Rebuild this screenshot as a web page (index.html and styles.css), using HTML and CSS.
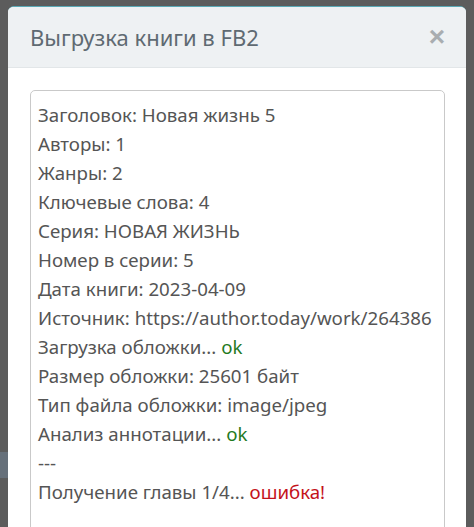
FILE: index.html
```html
<!DOCTYPE html>
<html lang="ru">
<head>
<meta charset="utf-8">
<title>Выгрузка книги в FB2</title>
<link rel="stylesheet" href="styles.css">
</head>
<body>
<div class="page">
  <span class="bg-strip"></span>
</div>
<div class="modal">
  <div class="modal-header">
    <h2 class="modal-title">Выгрузка книги в FB2</h2>
    <span class="close">×</span>
  </div>
  <div class="modal-body">
    <div class="log">
      <div class="line">Заголовок: Новая жизнь 5</div>
      <div class="line">Авторы: 1</div>
      <div class="line">Жанры: 2</div>
      <div class="line">Ключевые слова: 4</div>
      <div class="line">Серия: НОВАЯ ЖИЗНЬ</div>
      <div class="line">Номер в серии: 5</div>
      <div class="line">Дата книги: 2023-04-09</div>
      <div class="line">Источник: https://author.today/work/264386</div>
      <div class="line">Загрузка обложки... <span class="ok">ok</span></div>
      <div class="line">Размер обложки: 25601 байт</div>
      <div class="line">Тип файла обложки: image/jpeg</div>
      <div class="line">Анализ аннотации... <span class="ok">ok</span></div>
      <div class="line">---</div>
      <div class="line">Получение главы 1/4... <span class="err">ошибка!</span></div>
    </div>
  </div>
</div>
</body>
</html>
```

FILE: styles.css
```css
html, body {
  margin: 0;
  padding: 0;
  height: 100%;
  overflow: hidden;
}
body {
  background: #5c5c5c;
  font-family: "Noto Sans", "Open Sans", sans-serif;
  position: relative;
}
.page {
  position: absolute;
  inset: 0;
}
.bg-strip {
  position: absolute;
  left: 0;
  top: 452px;
  width: 8px;
  height: 26px;
  background: #66707a;
}
.modal {
  position: relative;
  margin: 6px 8px 0 8px;
  background: #fff;
  border-top: 1px solid #5aa9b5;
  border-radius: 6px 6px 0 0;
  overflow: hidden;
  height: 520px;
}
.modal-header {
  display: flex;
  align-items: center;
  justify-content: space-between;
  height: 61px;
  padding: 0 22px;
  background: #eef1f3;
  border-bottom: 1px solid #e2e6e8;
  box-sizing: border-box;
}
.modal-title {
  margin: 0;
  font-size: 22px;
  font-weight: 400;
  color: #5f6a72;
}
.close {
  font-size: 28px;
  font-weight: 700;
  color: #a9adb0;
  line-height: 1;
  margin-top: 0;
  margin-right: -1px;
  font-family: "Liberation Sans", sans-serif;
}
.modal-body {
  padding: 22px 21px 0 22px;
}
.log {
  border: 1px solid #c9c9c9;
  border-radius: 5px;
  padding: 9px 7px 0 7px;
  color: #555;
  font-size: 18.7px;
  line-height: 29px;
  height: 460px;
}
.line {
  white-space: nowrap;
}
.ok { color: #1f7a1f; }
.err { color: #c4121b; }
```
